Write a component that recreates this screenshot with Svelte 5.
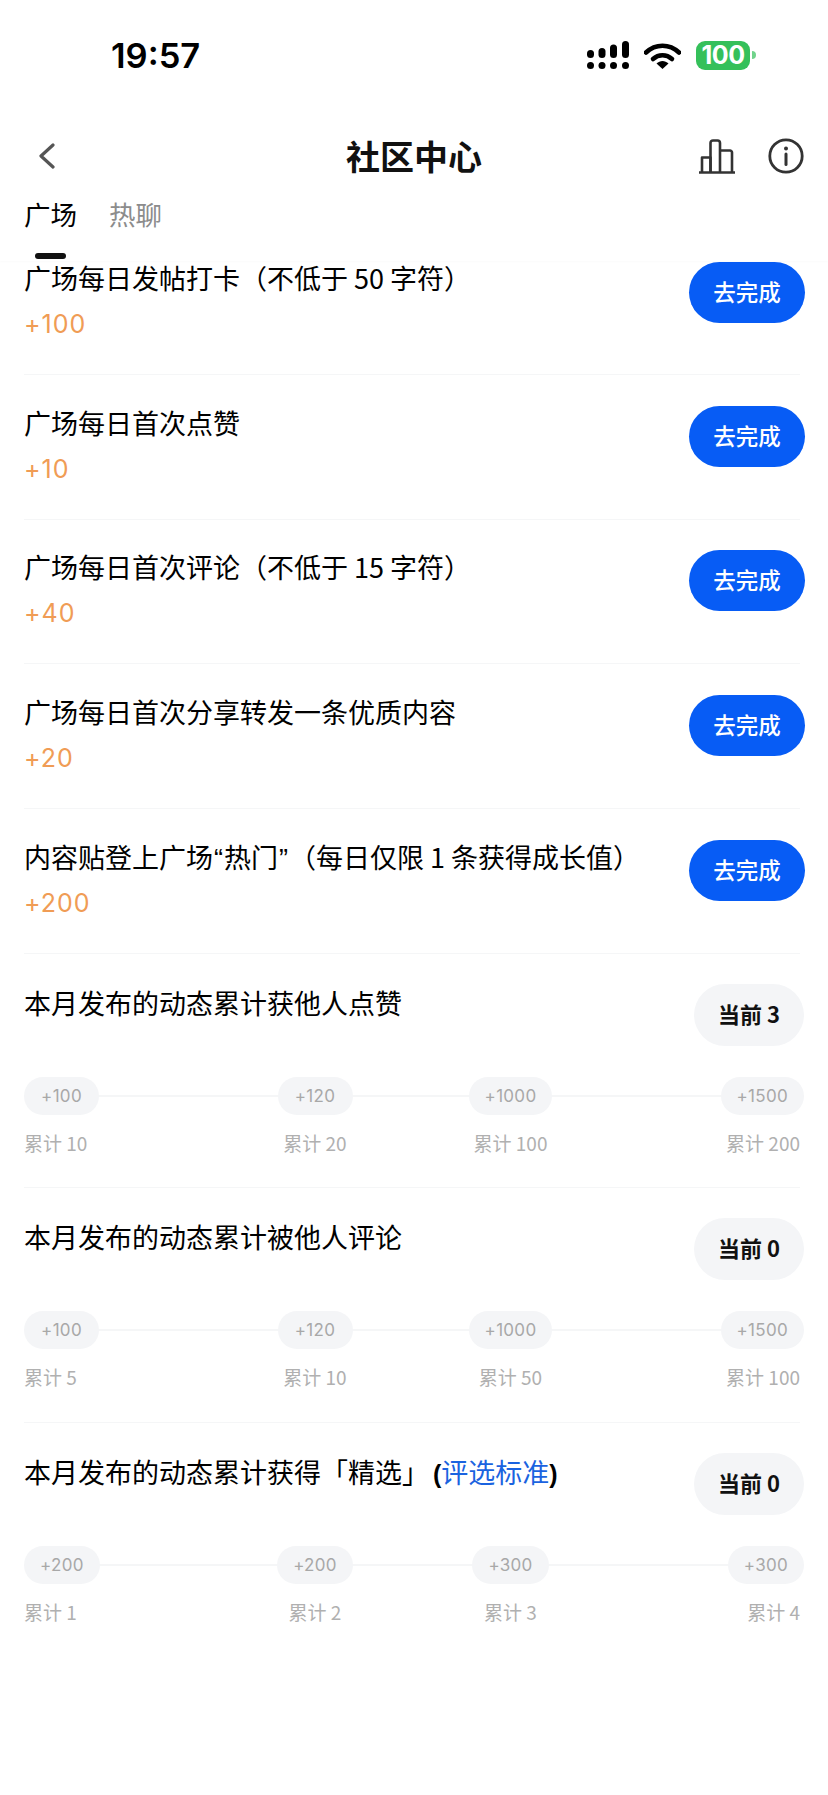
<script>
	const tasks = [
		{ title: '广场每日发帖打卡（不低于 50 字符）', points: '+100' },
		{ title: '广场每日首次点赞', points: '+10' },
		{ title: '广场每日首次评论（不低于 15 字符）', points: '+40' },
		{ title: '广场每日首次分享转发一条优质内容', points: '+20' },
		{ title: '内容贴登上广场“热门”（每日仅限 1 条获得成长值）', points: '+200' }
	];

	const monthly = [
		{
			title: '本月发布的动态累计获他人点赞',
			current: 3,
			steps: [['+100', '累计 10'], ['+120', '累计 20'], ['+1000', '累计 100'], ['+1500', '累计 200']]
		},
		{
			title: '本月发布的动态累计被他人评论',
			current: 0,
			steps: [['+100', '累计 5'], ['+120', '累计 10'], ['+1000', '累计 50'], ['+1500', '累计 100']]
		},
		{
			title: '本月发布的动态累计获得「精选」',
			link: '评选标准',
			current: 0,
			steps: [['+200', '累计 1'], ['+200', '累计 2'], ['+300', '累计 3'], ['+300', '累计 4']]
		}
	];

	// the curly quotes are narrow in the app, the CJK font draws them full width
	const splitQuotes = (text) => text.split(/([“”])/);
</script>

<main>
	<header class="top">
		<div class="status">
			<span class="time">19:57</span>
			<div class="status-icons">
				<svg width="42" height="28" viewBox="0 0 42 28" fill="#000">
					<rect x="0" y="9" width="7" height="8" rx="3.5" />
					<rect x="11.5" y="7" width="7" height="10" rx="3.5" />
					<rect x="23" y="3.5" width="7" height="13.5" rx="3.5" />
					<rect x="35" y="0" width="7" height="17" rx="3.5" />
					<rect x="0" y="21" width="7" height="7" rx="3.5" />
					<rect x="11.5" y="21" width="7" height="7" rx="3.5" />
					<rect x="23" y="21" width="7" height="7" rx="3.5" />
					<rect x="35" y="21" width="7" height="7" rx="3.5" />
				</svg>
				<svg class="wifi" width="37" height="27" viewBox="0 0 37 27">
					<path d="M2 10.5C11.500 1.500 25.500 1.500 35 10.500" fill="none" stroke="#000" stroke-width="4.600" stroke-linecap="round" />
					<path d="M9 17C14.500 12 22.500 12 28 17" fill="none" stroke="#000" stroke-width="4.600" stroke-linecap="round" />
					<path d="M12.500 21.500C16 18 21 18 24.500 21.500L18.500 27Z" fill="#000" />
				</svg>
				<div class="battery">
					<span class="level">100</span>
					<span class="nub"></span>
				</div>
			</div>
		</div>

		<nav class="nav">
			<svg class="back" width="17" height="26" viewBox="0 0 17 26">
				<path d="M15 2L3 13L15 24" fill="none" stroke="#555" stroke-width="3.200" stroke-linecap="round" stroke-linejoin="round" />
			</svg>
			<h1>社区中心</h1>
			<div class="nav-actions">
				<svg width="36" height="35" viewBox="0 0 36 35" fill="none" stroke="#333" stroke-width="2.600" stroke-linejoin="round">
					<path d="M3 33V18.500H11.500V33" />
					<path d="M11.500 33V4C11.500 2.500 12.500 1.500 14 1.500H18.500C20 1.500 21 2.500 21 4V33" />
					<path d="M21 11.500H31C32 11.500 33 12.500 33 13.500V33" />
					<path d="M0.500 33.500H35.500" stroke-linecap="round" />
				</svg>
				<svg width="36" height="36" viewBox="0 0 36 36" fill="none" stroke="#333">
					<circle cx="18" cy="18" r="16.200" stroke-width="2.800" />
					<circle cx="18" cy="10.500" r="2" fill="#333" stroke="none" />
					<path d="M18 16V26.500" stroke-width="3" stroke-linecap="round" />
				</svg>
			</div>
		</nav>

		<div class="tabs">
			<span class="tab active">广场</span>
			<span class="tab">热聊</span>
		</div>
	</header>

	<div class="list">
		{#each tasks as task, i}
			{#if i > 0}<hr />{/if}
			<section class="row">
				<div class="row-text">
					<p class="title">
						{#each splitQuotes(task.title) as part}
							{#if part === '“' || part === '”'}<span class="quote">{part}</span>{:else}{part}{/if}
						{/each}
					</p>
					<p class="points">{task.points}</p>
				</div>
				<button class="go">去完成</button>
			</section>
		{/each}

		{#each monthly as group}
			<hr />
			<section class="group">
				<div class="group-head">
					<p class="title">
						{group.title}{#if group.link}<span class="paren open">(</span><span class="link">{group.link}</span><span class="paren">)</span>{/if}
					</p>
					<span class="current">当前 {group.current}</span>
				</div>
				<div class="steps">
					{#each group.steps as [reward, label]}
						<div class="step">
							<span class="reward">{reward}</span>
							<span class="label">{label}</span>
						</div>
					{/each}
				</div>
			</section>
		{/each}
	</div>
</main>

<style>
	:global(body) {
		background: #fff;
	}

	main {
		width: 828px;
		height: 1795px;
		overflow: hidden;
		background: #fff;
		font-family: "Noto Sans CJK SC", "Liberation Sans", sans-serif;
		color: #111;
	}

	p,
	h1 {
		margin: 0;
	}

	.top {
		height: 261px;
		box-shadow: 0 1px 2px rgba(0, 0, 0, 0.02);
		position: relative;
	}

	.status {
		height: 110px;
		display: flex;
		align-items: center;
		justify-content: space-between;
		padding: 0 72px 0 111px;
	}

	.time {
		font-family: Inter, sans-serif;
		font-size: 34.500px;
		font-weight: 600;
		color: #000;
	}

	.status-icons {
		display: flex;
		align-items: center;
		gap: 15px;
	}

	.battery {
		display: flex;
		align-items: center;
		gap: 2px;
	}

	.level {
		width: 54px;
		height: 29px;
		border-radius: 9px;
		background: #35c05a;
		color: #fff;
		font-family: Inter, sans-serif;
		font-size: 25px;
		font-weight: 700;
		letter-spacing: -0.5px;
		line-height: 29px;
		text-align: center;
	}

	.nub {
		width: 4px;
		height: 8px;
		border-radius: 0 4px 4px 0;
		background: #35c05a;
		opacity: 0.7;
	}

	.nav {
		height: 64px;
		padding: 0 24px 0 38px;
		position: relative;
		display: flex;
		align-items: center;
		justify-content: space-between;
		margin-top: 14px;
	}

	.nav h1 {
		position: absolute;
		left: 0;
		right: 0;
		text-align: center;
		font-size: 34px;
		font-weight: 700;
		line-height: 64px;
		color: #111;
	}

	.nav-actions {
		display: flex;
		align-items: center;
		gap: 33px;
		position: relative;
	}

	.tabs {
		display: flex;
		gap: 32px;
		padding: 8px 0 0 24px;
	}

	.tab {
		font-size: 26.500px;
		line-height: 36px;
		color: #8c8c8c;
		position: relative;
	}

	.tab.active {
		color: #000;
	}

	.tab.active::after {
		content: "";
		position: absolute;
		left: 11px;
		top: 57px;
		width: 31px;
		height: 6px;
		border-radius: 3px;
		background: #111;
	}

	hr {
		border: 0;
		height: 1px;
		background: #f5f6f7;
		margin: 0 28px 0 24px;
	}

	.row {
		display: flex;
		justify-content: space-between;
		align-items: flex-start;
		padding: 30.700px 23px 32px 24px;
	}

	.row:first-child {
		padding-top: 0;
	}

	.row:first-child .go {
		margin-top: 1px;
	}

	.title {
		font-size: 27px;
		line-height: 36px;
		color: #000;
		white-space: nowrap;
		text-spacing-trim: space-all;
	}

	.row-text .title {
		margin-top: -1px;
	}

	.quote {
		font-family: "Liberation Sans", sans-serif;
		line-height: 0;
		margin: 0 1px;
	}

	.points {
		margin-top: 10px;
		font-family: Inter, "Noto Sans CJK SC", sans-serif;
		font-size: 25px;
		letter-spacing: 1px;
		line-height: 36px;
		color: #f09c55;
	}

	.go {
		width: 116px;
		height: 61px;
		border: 0;
		border-radius: 31px;
		background: #075cf5;
		color: #fff;
		font: inherit;
		font-size: 22.500px;
		font-weight: 500;
		padding: 0 0 3px;
	}

	.group {
		padding: 0 24px 30.500px;
	}

	.group-head {
		display: flex;
		justify-content: space-between;
		align-items: flex-start;
		padding-top: 30px;
	}

	.group-head .title {
		padding-top: 1px;
	}

	.paren {
		font-weight: 700;
		font-family: "Liberation Sans", sans-serif;
		font-size: 25px;
		line-height: 0;
	}

	.paren.open {
		margin-left: 4px;
	}

	.link {
		color: #1a63e0;
	}

	.current {
		width: 110px;
		height: 62px;
		border-radius: 31px;
		background: #f4f5f7;
		font-size: 22px;
		font-weight: 700;
		line-height: 59px;
		text-align: center;
	}

	.steps {
		display: grid;
		grid-template-columns: 194px 194px 197px 195px;
		margin-top: 31px;
		position: relative;
	}

	.steps::before {
		content: "";
		position: absolute;
		left: 0;
		right: 0;
		top: 18px;
		height: 2px;
		background: #f5f6f7;
	}

	.step {
		display: flex;
		flex-direction: column;
		align-items: center;
		position: relative;
	}

	.step:first-child {
		align-items: flex-start;
	}

	.step:last-child {
		align-items: flex-end;
	}

	.step:last-child .label {
		padding-right: 4px;
	}

	.reward {
		height: 38px;
		min-width: 75px;
		padding: 0 16px;
		box-sizing: border-box;
		border-radius: 19px;
		background: #f4f5f7;
		color: #a8a8a8;
		font-family: Inter, sans-serif;
		font-size: 17px;
		letter-spacing: 0.3px;
		line-height: 38px;
		text-align: center;
	}

	.label {
		margin-top: 14px;
		font-size: 19px;
		line-height: 28px;
		color: #b0b0b0;
	}
</style>
